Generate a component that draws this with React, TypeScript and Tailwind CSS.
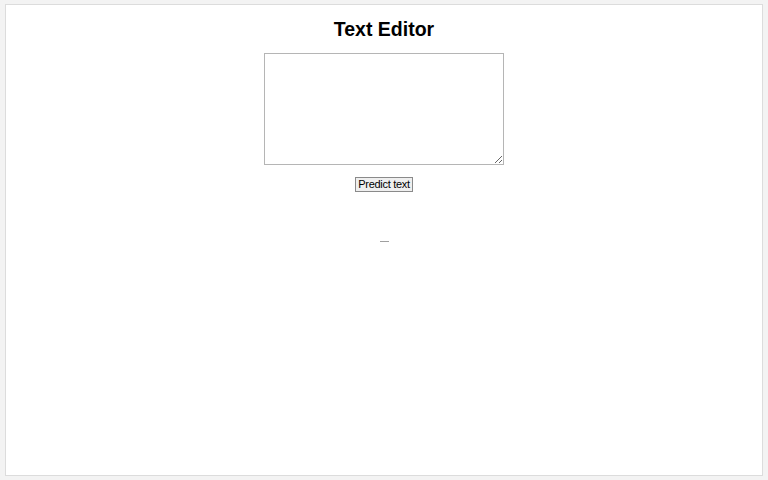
import { useState } from 'react'

export default function App() {
    const [text, setText] = useState('')
    const [prediction] = useState('')

    return (
        <div className="h-[480px] w-[768px] bg-[#f3f3f3] px-[5px] py-[4px]" style={{ fontFamily: '"Liberation Sans", Arial, sans-serif' }}>
            <div className="flex h-full flex-col items-center border border-[#dcdcdc] bg-white">
                <h1 className="mt-[12px] text-[19.5px] font-bold leading-[24px] text-black">Text Editor</h1>

                <textarea
                    value={text}
                    onChange={(e) => setText(e.target.value)}
                    className="mt-[12px] h-[112px] w-[240px] resize border border-[#b5b5b5] bg-white p-[2px] text-[13px] outline-none"
                />

                <button
                    type="button"
                    className="mt-[12px] h-[15px] border border-[#8a8a8a] bg-[#efefef] px-[2px] text-[11px] leading-[13px] tracking-[-0.3px] text-black"
                >
                    Predict text
                </button>

                <div className="mt-[47px] flex h-[4px] items-center justify-center">
                    <span className="block h-px w-[9px] bg-[#a0a0a0]">{prediction}</span>
                </div>
            </div>
        </div>
    )
}
